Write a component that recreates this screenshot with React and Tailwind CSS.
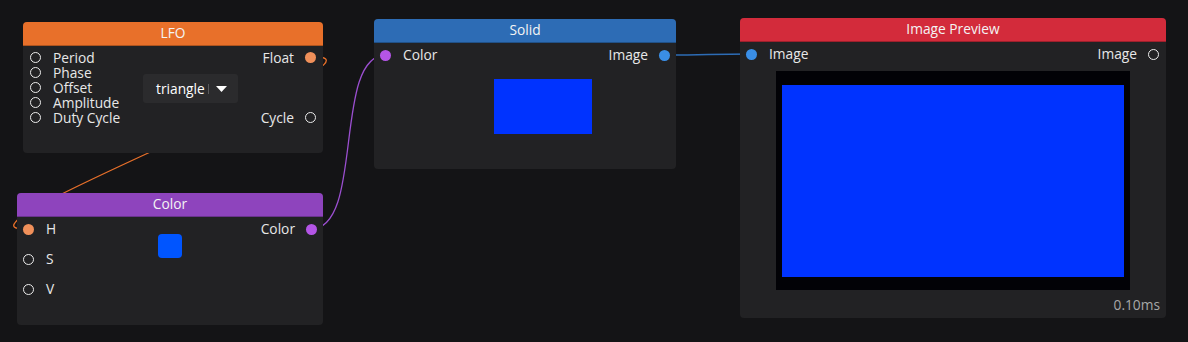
import React from "react";

const font = { fontFamily: '"Open Sans", "Noto Sans", sans-serif' };

function Hollow() {
  return <span className="block w-[11px] h-[11px] rounded-full border-[1.6px] border-[#ececec] shrink-0" />;
}
function Dot({ c }) {
  return <span className={`block w-[11px] h-[11px] rounded-full shrink-0 ${c}`} />;
}

function Header({ title, bg }) {
  return (
    <div className={`h-[24px] flex items-center justify-center text-[13.75px] text-[#f4f4f4] border-b border-[#00000040] ${bg}`}>
      {title}
    </div>
  );
}

export default function App() {
  return (
    <div className="relative w-[1188px] h-[342px] bg-[#141416] overflow-hidden text-[#e8e8e8]" style={font}>
      <svg className="absolute inset-0" width="1188" height="342">
        <path d="M 316 57 C 400 57, -60 229, 24 229" stroke="#e8702a" strokeWidth="1.3" fill="none" />
        <path d="M 311 229 C 365 229, 332 55, 386 55" stroke="#9b4fd0" strokeWidth="1.3" fill="none" />
        <path d="M 665 55 C 710 55, 707 54, 752 54" stroke="#2d6cb5" strokeWidth="1.5" fill="none" />
      </svg>

      {/* LFO */}
      <div className="absolute left-[23px] top-[22px] w-[300px] h-[131px] rounded-[4px] overflow-hidden bg-[#222224]">
        <Header title="LFO" bg="bg-[#e8702a]" />
        <div className="flex pt-[4px] px-[7px] text-[13.75px] leading-[15px]">
          <div className="w-[113px] flex flex-col">
            {["Period", "Phase", "Offset", "Amplitude", "Duty Cycle"].map((t) => (
              <div key={t} className="h-[15px] flex items-center gap-[12px]">
                <Hollow />
                <span className="leading-[15px]">{t}</span>
              </div>
            ))}
          </div>
          <div className="mt-[24px] w-[95px] h-[29px] rounded-[3px] bg-[#2b2b2d] flex items-center pl-[13px] text-white">
            <span className="leading-[15px]">triangle</span>
            <span className="ml-[3px] w-px h-[10px] bg-[#5a5a5c]" />
            <svg className="ml-[7px]" width="11" height="6" viewBox="0 0 11 6">
              <path d="M0 0 L11 0 L5.5 6 Z" fill="#ffffff" />
            </svg>
          </div>
          <div className="flex-1 h-[75px] flex flex-col justify-between items-end">
            <div className="h-[15px] flex items-center gap-[11px]">
              <span className="leading-[15px]">Float</span>
              <Dot c="bg-[#f0905a]" />
            </div>
            <div className="h-[15px] flex items-center gap-[11px]">
              <span className="leading-[15px]">Cycle</span>
              <Hollow />
            </div>
          </div>
        </div>
      </div>

      {/* Color */}
      <div className="absolute left-[17px] top-[193px] w-[306px] h-[132px] rounded-[4px] overflow-hidden bg-[#222224]">
        <Header title="Color" bg="bg-[#8e44bd]" />
        <div className="grid grid-cols-[1fr_auto_1fr] pt-[2px] px-[6px] text-[13.75px]">
          <div className="flex flex-col gap-[10px]">
            <div className="h-[20px] flex items-center gap-[12px]">
              <Dot c="bg-[#f0905a]" />
              <span>H</span>
            </div>
            <div className="h-[20px] flex items-center gap-[12px]">
              <Hollow />
              <span>S</span>
            </div>
            <div className="h-[20px] flex items-center gap-[12px]">
              <Hollow />
              <span>V</span>
            </div>
          </div>
          <div className="pt-[15px]">
            <div className="w-[24px] h-[24px] rounded-[4px] bg-[#0055ff]" />
          </div>
          <div className="flex justify-end">
            <div className="h-[20px] flex items-center gap-[11px]">
              <span>Color</span>
              <Dot c="bg-[#b455e6]" />
            </div>
          </div>
        </div>
      </div>

      {/* Solid */}
      <div className="absolute left-[374px] top-[19px] w-[302px] h-[150px] rounded-[4px] overflow-hidden bg-[#222224]">
        <Header title="Solid" bg="bg-[#2d6cb5]" />
        <div className="px-[6px] pt-[2px] text-[13.75px]">
          <div className="h-[20px] flex items-center justify-between">
            <div className="flex items-center gap-[12px]">
              <Dot c="bg-[#b455e6]" />
              <span>Color</span>
            </div>
            <div className="flex items-center gap-[11px]">
              <span>Image</span>
              <Dot c="bg-[#3a8ee6]" />
            </div>
          </div>
          <div className="ml-[114px] mt-[14px] w-[98px] h-[55px] bg-[#0033ff]" />
        </div>
      </div>

      {/* Image Preview */}
      <div className="absolute left-[740px] top-[18px] w-[426px] h-[300px] rounded-[4px] overflow-hidden bg-[#222224]">
        <Header title="Image Preview" bg="bg-[#d32b3b]" />
        <div className="px-[6px] pt-[2px] text-[13.75px]">
          <div className="h-[20px] flex items-center justify-between">
            <div className="flex items-center gap-[12px]">
              <Dot c="bg-[#3a8ee6]" />
              <span>Image</span>
            </div>
            <div className="flex items-center gap-[11px] pr-[1px]">
              <span>Image</span>
              <Hollow />
            </div>
          </div>
          <div className="ml-[30px] mt-[7px] w-[354px] h-[219px] bg-[#020206] px-[6px] pt-[14px] pb-[13px]">
            <div className="w-full h-full bg-[#0033ff]" />
          </div>
          <div className="flex justify-end pt-[5px] text-[#a8a8a8]">0.10ms</div>
        </div>
      </div>
    </div>
  );
}
